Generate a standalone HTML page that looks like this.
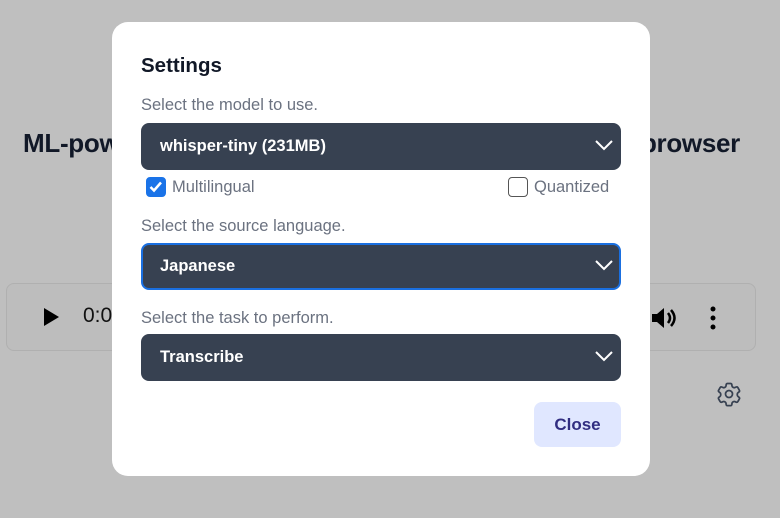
<!DOCTYPE html>
<html><head><meta charset="utf-8"><style>
*{box-sizing:border-box;margin:0;padding:0}
body{width:780px;height:518px;background:#bfbfbf;font-family:"Liberation Sans",sans-serif;position:relative;overflow:hidden}
.h1{position:absolute;top:128px;left:23px;font-size:26px;font-weight:bold;color:#111827;letter-spacing:-0.3px;white-space:nowrap}
.h1b{position:absolute;top:128px;right:40px;font-size:26px;font-weight:bold;color:#111827;letter-spacing:-0.3px}
.audio{position:absolute;left:6px;top:283px;width:750px;height:68px;border:1px solid #b0b0b0;border-radius:8px;background:#bdbdbd}
.modal{position:absolute;left:112px;top:22px;width:538px;height:454px;background:#fff;border-radius:16px}
.title{position:absolute;left:29px;top:32px;font-size:20.5px;font-weight:bold;color:#111827}
.lbl{position:absolute;left:29px;font-size:16.5px;color:#6b7280}
.sel{position:absolute;left:29px;width:480px;height:47px;background:#374151;border-radius:8px;color:#fff;font-size:16.5px;font-weight:bold;padding-left:19px;line-height:47px}
.sel svg{position:absolute;right:8px;top:16px}
.cb{position:absolute;top:155px;font-size:16.5px;color:#6b7280;display:flex;align-items:center;gap:6px}
.box{width:20px;height:20px;border-radius:4px;border:1.5px solid #555;background:#fff}
.close{position:absolute;left:422px;top:380px;width:87px;height:45px;background:#e0e7ff;border-radius:8px;color:#312e81;font-size:17px;font-weight:bold;text-align:center;line-height:45px}
</style></head><body>
<div class="h1">ML-powered speech</div>
<div class="h1b">browser</div>
<div class="audio">
<svg style="position:absolute;left:36px;top:24px" width="16" height="18"><path d="M1 0L16 9L1 18Z" fill="#000"/></svg>
<div style="position:absolute;left:76px;top:20px;font-size:21px;color:#111">0:00</div>
<svg style="position:absolute;left:643px;top:22px" width="28" height="24" viewBox="0 0 28 24"><path d="M2 8h5l7-6v20l-7-6H2z" fill="#000"/><path d="M18 7q4 5 0 10M21 4q7 8 0 16" stroke="#000" stroke-width="2.5" fill="none"/></svg>
<svg style="position:absolute;left:703px;top:22px" width="6" height="24"><circle cx="3" cy="3" r="2.5"/><circle cx="3" cy="12" r="2.5"/><circle cx="3" cy="21" r="2.5"/></svg>
</div>
<svg style="position:absolute;left:715px;top:380px" width="28" height="28" viewBox="0 0 24 24" fill="none" stroke="#374151" stroke-width="1.5"><path d="M9.6 3.9c.1-.5.5-.9 1.1-.9h2.6c.6 0 1 .4 1.1.9l.2 1.3c.1.4.4.8.8 1l.3.2c.4.2.9.3 1.3.1l1.2-.5c.5-.2 1.1 0 1.4.5l1.3 2.3c.3.5.2 1.1-.3 1.4l-1 .8c-.4.3-.5.7-.5 1.2v.6c0 .5.1.9.5 1.2l1 .8c.4.4.6 1 .3 1.4l-1.300 2.3c-.3.5-.9.7-1.4.5l-1.2-.5c-.4-.2-.9-.1-1.3.1l-.3.2c-.4.2-.7.6-.8 1l-.2 1.3c-.1.5-.5.9-1.1.9h-2.6c-.6 0-1-.4-1.1-.9l-.2-1.3c-.1-.4-.4-.8-.8-1l-.3-.2c-.4-.2-.9-.3-1.300-.1l-1.2.5c-.5.2-1.100 0-1.400-.5l-1.300-2.300c-.3-.5-.2-1.100.3-1.400l1-.8c.4-.3.5-.7.5-1.200v-.6c0-.5-.1-.9-.5-1.200l-1-.8c-.4-.4-.6-1-.3-1.400l1.300-2.300c.3-.5.9-.7 1.400-.5l1.200.5c.4.2.9.1 1.300-.1l.3-.2c.4-.2.7-.6.8-1z"/><circle cx="12" cy="12" r="3"/></svg>
<div class="modal">
<div class="title">Settings</div>
<div class="lbl" style="top:74px">Select the model to use.</div>
<div class="sel" style="top:101px">whisper-tiny (231MB)<svg width="18" height="12"><path d="M1 2l8 8 8-8" stroke="#fff" stroke-width="2" fill="none"/></svg></div>
<div class="cb" style="left:34px"><div class="box" style="background:#1a73e8;border-color:#1a73e8;position:relative"><svg width="17" height="17" style="position:absolute;left:0;top:0"><path d="M3.5 9l3.5 3.5 7-8" stroke="#fff" stroke-width="2.5" fill="none"/></svg></div>Multilingual</div>
<div class="cb" style="left:396px"><div class="box"></div>Quantized</div>
<div class="lbl" style="top:195px">Select the source language.</div>
<div class="sel" style="top:221px;border:2px solid #1a6fe0;line-height:43px;padding-left:17px">Japanese<svg width="18" height="12" style="top:14px;right:6px"><path d="M1 2l8 8 8-8" stroke="#fff" stroke-width="2" fill="none"/></svg></div>
<div class="lbl" style="top:287px">Select the task to perform.</div>
<div class="sel" style="top:312px">Transcribe<svg width="18" height="12"><path d="M1 2l8 8 8-8" stroke="#fff" stroke-width="2" fill="none"/></svg></div>
<div class="close">Close</div>
</div>
</body></html>
